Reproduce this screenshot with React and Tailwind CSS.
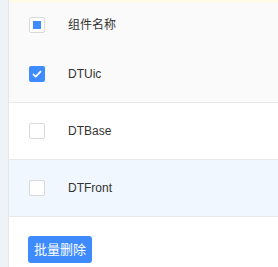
import React from "react";

const rows = [
  { name: "DTUic", checked: true, bg: "bg-[#fafafa]" },
  { name: "DTBase", checked: false, bg: "bg-white" },
  { name: "DTFront", checked: false, bg: "bg-[#f0f7ff]" },
];

const Box = ({ state }) => {
  if (state === "checked") {
    return (
      <span className="w-4 h-4 rounded-[2px] bg-[#3d8bff] flex items-center justify-center">
        <svg width="10" height="8" viewBox="0 0 10 8" fill="none">
          <path d="M1 4 L3.8 6.6 L9 1.2" stroke="white" strokeWidth="1.8" />
        </svg>
      </span>
    );
  }
  if (state === "some") {
    return (
      <span className="w-4 h-4 rounded-[2px] border border-[#d9d9d9] bg-white flex items-center justify-center">
        <span className="w-2 h-2 bg-[#3d8bff]" />
      </span>
    );
  }
  return <span className="w-4 h-4 rounded-[2px] border border-[#d9d9d9] bg-white" />;
};

export default function App() {
  return (
    <div
      className="w-[278px] h-[267px] overflow-hidden flex bg-white text-[12px] text-[#333]"
      style={{ fontFamily: '"Liberation Sans", Arial, "Noto Sans CJK SC", sans-serif' }}
    >
      <div className="w-[9px] shrink-0 bg-[#eef3f8] border-r border-[#e4e8ee]" />
      <div className="flex-1 flex flex-col">
        <div className="h-[3px] bg-[#fffbe8]" />
        <div className="h-[43px] flex items-center bg-[#fafafa] pl-[20px]">
          <Box state="some" />
          <span className="ml-[23px]">组件名称</span>
        </div>
        {rows.map((r) => (
          <div
            key={r.name}
            className={`h-[57px] flex items-center pl-[20px] border-b border-[#e8e8e8] ${r.bg}`}
          >
            <Box state={r.checked ? "checked" : "none"} />
            <span className="ml-[23px]">{r.name}</span>
          </div>
        ))}
        <div className="pl-[19px] pt-[19px]">
          <button className="w-[64px] h-[27px] rounded-[3px] bg-[#3d8bff] text-white text-[13px]">
            批量删除
          </button>
        </div>
      </div>
    </div>
  );
}
